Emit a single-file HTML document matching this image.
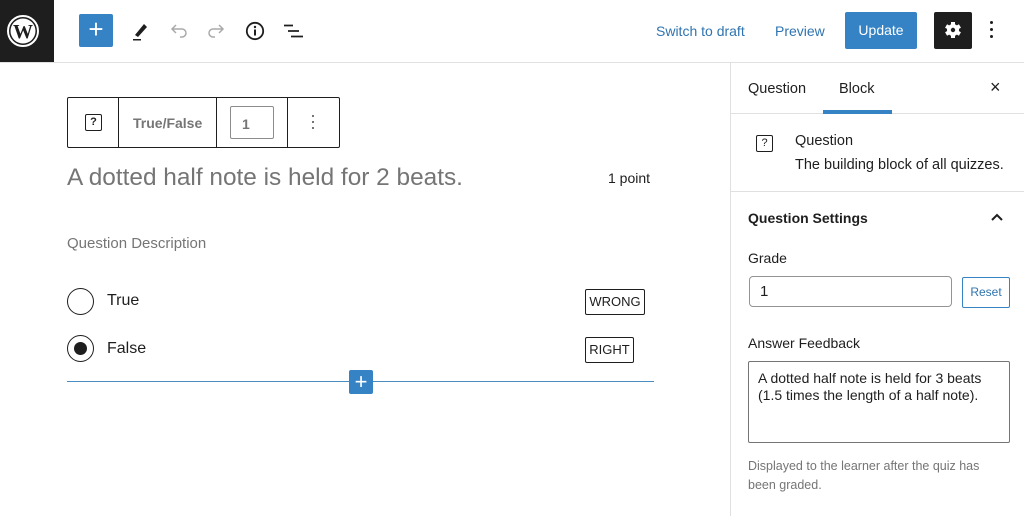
<!DOCTYPE html>
<html><head><style>
*{box-sizing:border-box;margin:0;padding:0}
body{width:1024px;height:516px;overflow:hidden;background:#fff;font-family:"Liberation Sans",sans-serif;color:#1e1e1e;position:relative}
.a{position:absolute}
</style></head><body>
<div class="a" style="left:0;top:0;width:54px;height:62px;background:#1e1e1e"></div>
<svg class="a" style="left:6px;top:14px" width="34" height="34" viewBox="0 0 34 34"><circle cx="17" cy="17" r="15" fill="none" stroke="#fff" stroke-width="2"/><circle cx="17" cy="17" r="12.5" fill="#fff"/><text x="17" y="24" text-anchor="middle" font-family="Liberation Serif" font-weight="bold" font-size="20" fill="#1e1e1e">W</text></svg>
<div class="a" style="left:0;top:62px;width:1024px;height:1px;background:#e0e0e0"></div>
<div class="a" style="left:79px;top:14px;width:34px;height:33px;background:#3582c4;border-radius:2px;color:#fff;font-size:26px;line-height:31px;text-align:center;font-weight:300">+</div>
<svg class="a" style="left:129px;top:19px" width="24" height="24" viewBox="0 0 24 24"><path d="M6 16 L15 5 L18 8 L9 18 Z" fill="#1e1e1e"/><rect x="4" y="20" width="8" height="1.5" fill="#1e1e1e"/></svg>
<svg class="a" style="left:167px;top:19px" width="24" height="24" viewBox="0 0 24 24"><path d="M6 10 H15 A4 4 0 0 1 15 18 H13 M9 6 L5 10 L9 14" fill="none" stroke="#aaa" stroke-width="1.5"/></svg>
<svg class="a" style="left:204px;top:19px" width="24" height="24" viewBox="0 0 24 24"><path d="M18 10 H9 A4 4 0 0 0 9 18 H11 M15 6 L19 10 L15 14" fill="none" stroke="#aaa" stroke-width="1.5"/></svg>
<svg class="a" style="left:243px;top:19px" width="24" height="24" viewBox="0 0 24 24"><circle cx="12" cy="12" r="8.2" fill="none" stroke="#1e1e1e" stroke-width="1.8"/><rect x="11" y="10.5" width="2" height="6" fill="#1e1e1e"/><circle cx="12" cy="8" r="1.2" fill="#1e1e1e"/></svg>
<svg class="a" style="left:281px;top:19px" width="24" height="24" viewBox="0 0 24 24"><path d="M3 6.5H12M7 12H18M10 17.5H22" stroke="#1e1e1e" stroke-width="1.8"/></svg>
<div class="a" style="left:656px;top:23px;font-size:14px;color:#2f74b0">Switch to draft</div>
<div class="a" style="left:775px;top:23px;font-size:14px;color:#2f74b0">Preview</div>
<div class="a" style="left:845px;top:12px;width:72px;height:37px;background:#3582c4;border-radius:2px;color:#fff;font-size:14px;line-height:37px;text-align:center">Update</div>
<div class="a" style="left:934px;top:12px;width:38px;height:37px;background:#1e1e1e;border-radius:2px"></div>
<svg class="a" style="left:943px;top:20px" width="20" height="20" viewBox="0 0 20 20"><g fill="#fff"><circle cx="10" cy="10" r="6"/><rect x="8" y="2" width="4" height="16"/><rect x="8" y="2" width="4" height="16" transform="rotate(60 10 10)"/><rect x="8" y="2" width="4" height="16" transform="rotate(120 10 10)"/></g><circle cx="10" cy="10" r="2.2" fill="#1e1e1e"/></svg>
<div class="a" style="left:990px;top:21px;width:3px;height:3px;background:#1e1e1e;border-radius:50%;box-shadow:0 7px 0 #1e1e1e,0 14px 0 #1e1e1e"></div>

<div class="a" style="left:67px;top:97px;width:273px;height:51px;border:1px solid #1e1e1e;border-radius:2px"></div>
<div class="a" style="left:118px;top:98px;width:1px;height:49px;background:#1e1e1e"></div>
<div class="a" style="left:216px;top:98px;width:1px;height:49px;background:#1e1e1e"></div>
<div class="a" style="left:287px;top:98px;width:1px;height:49px;background:#1e1e1e"></div>
<div class="a" style="left:85px;top:114px;width:17px;height:17px;border:1.5px solid #1e1e1e;border-radius:2px;font-size:11px;font-weight:bold;text-align:center;line-height:14px">?</div>
<div class="a" style="left:133px;top:115px;font-size:14px;font-weight:bold;color:#757575">True/False</div>
<div class="a" style="left:230px;top:106px;width:44px;height:33px;border:1px solid #8c8c8c;border-radius:2px;font-size:14px;color:#757575;padding:9px 0 0 11px;font-weight:bold">1</div>
<div class="a" style="left:312px;top:115px;width:2px;height:2px;background:#757575;box-shadow:0 6px 0 #757575,0 12px 0 #757575"></div>

<div class="a" style="left:67px;top:164px;font-size:24.4px;color:#757575">A dotted half note is held for 2 beats.</div>
<div class="a" style="left:608px;top:170px;font-size:14px;color:#1e1e1e">1 point</div>
<div class="a" style="left:67px;top:235px;font-size:15px;color:#757575">Question Description</div>
<div class="a" style="left:67px;top:288px;width:27px;height:27px;border:1.5px solid #1e1e1e;border-radius:50%"></div>
<div class="a" style="left:107px;top:292px;font-size:16px">True</div>
<div class="a" style="left:67px;top:335px;width:27px;height:27px;border:1.5px solid #1e1e1e;border-radius:50%"></div>
<div class="a" style="left:74px;top:342px;width:13px;height:13px;background:#1e1e1e;border-radius:50%"></div>
<div class="a" style="left:107px;top:340px;font-size:16px">False</div>
<div class="a" style="left:585px;top:289px;width:60px;height:26px;border:1px solid #1e1e1e;border-radius:2px;font-size:13px;line-height:24px;text-align:center">WRONG</div>
<div class="a" style="left:585px;top:337px;width:49px;height:26px;border:1px solid #1e1e1e;border-radius:2px;font-size:13px;line-height:24px;text-align:center">RIGHT</div>
<div class="a" style="left:67px;top:381px;width:587px;height:1px;background:#4a8cbf"></div>
<div class="a" style="left:349px;top:370px;width:24px;height:24px;background:#3582c4;border-radius:2px;color:#fff;font-size:22px;line-height:23px;text-align:center">+</div>

<div class="a" style="left:730px;top:63px;width:1px;height:453px;background:#e0e0e0"></div>
<div class="a" style="left:731px;top:113px;width:293px;height:1px;background:#e0e0e0"></div>
<div class="a" style="left:731px;top:191px;width:293px;height:1px;background:#e0e0e0"></div>
<div class="a" style="left:748px;top:81px;font-size:14.5px">Question</div>
<div class="a" style="left:839px;top:81px;font-size:14.5px">Block</div>
<div class="a" style="left:823px;top:110px;width:69px;height:4px;background:#3582c4"></div>
<div class="a" style="left:990px;top:77px;font-size:18px">×</div>
<div class="a" style="left:756px;top:135px;width:17px;height:17px;border:1.5px solid #1e1e1e;border-radius:2px;font-size:11px;text-align:center;line-height:14px">?</div>
<div class="a" style="left:795px;top:133px;font-size:14.5px">Question</div>
<div class="a" style="left:795px;top:157px;font-size:14.5px">The building block of all quizzes.</div>
<div class="a" style="left:748px;top:210px;font-size:14px;font-weight:bold">Question Settings</div>
<svg class="a" style="left:988px;top:210px" width="18" height="14" viewBox="0 0 18 14"><path d="M4 10 L9 5 L14 10" fill="none" stroke="#1e1e1e" stroke-width="2"/></svg>
<div class="a" style="left:748px;top:250px;font-size:14px">Grade</div>
<div class="a" style="left:749px;top:276px;width:203px;height:31px;border:1px solid #949494;border-radius:4px;font-size:15px;padding:6px 10px">1</div>
<div class="a" style="left:962px;top:277px;width:48px;height:31px;border:1px solid #3582c4;border-radius:2px;font-size:12px;color:#2f74b0;line-height:29px;text-align:center">Reset</div>
<div class="a" style="left:748px;top:335px;font-size:14px">Answer Feedback</div>
<div class="a" style="left:748px;top:361px;width:262px;height:82px;border:1px solid #757575;border-radius:2px;font-size:14px;line-height:17px;padding:8px 9px">A dotted half note is held for 3 beats (1.5 times the length of a half note).</div>
<div class="a" style="left:748px;top:457px;width:258px;font-size:12.5px;line-height:19px;color:#757575">Displayed to the learner after the quiz has been graded.</div>
</body></html>
